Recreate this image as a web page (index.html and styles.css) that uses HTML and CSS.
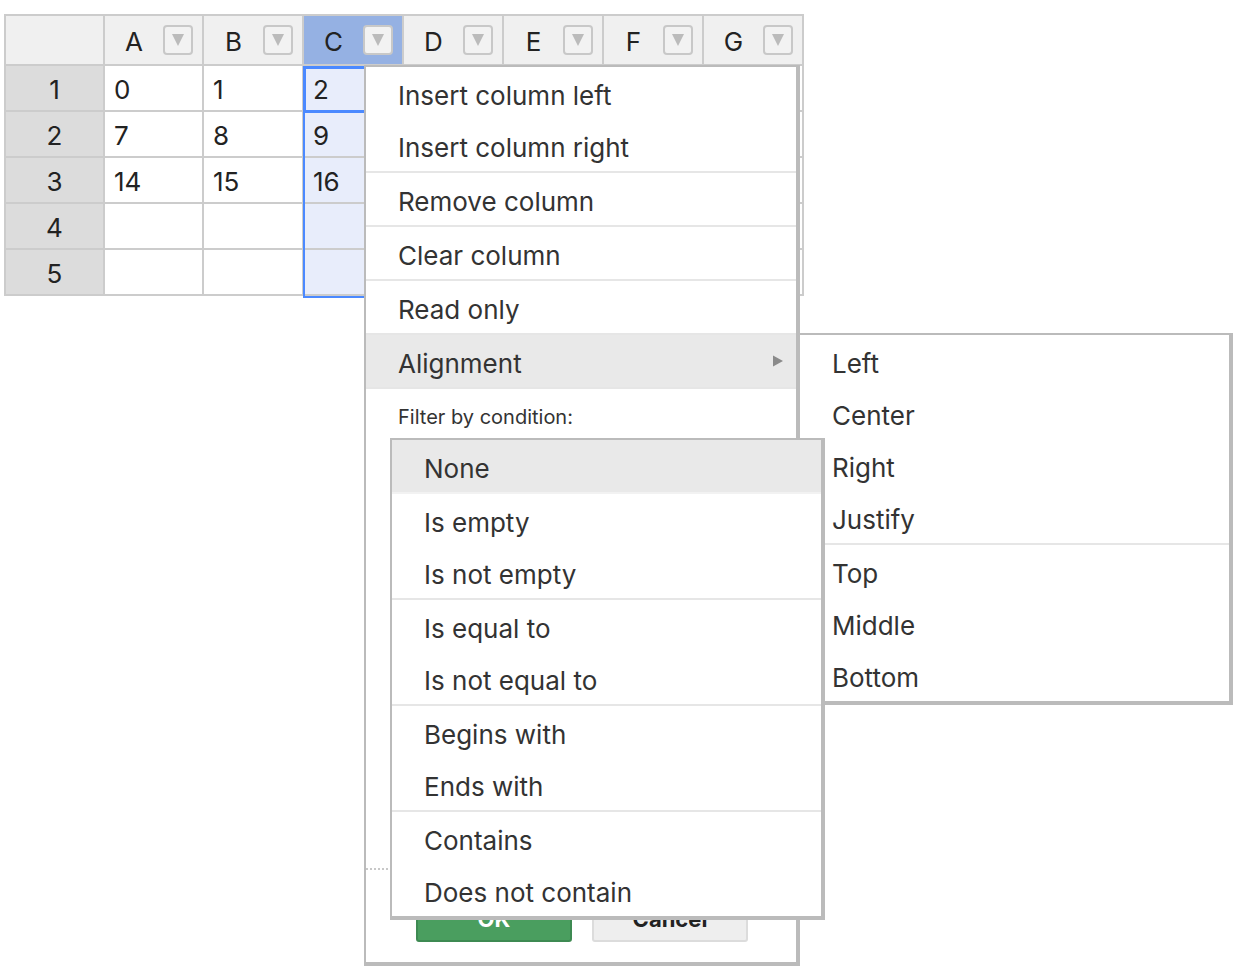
FILE: index.html
```html
<!DOCTYPE html>
<html lang="en">
<head>
<meta charset="utf-8">
<title>Column menu</title>
<link rel="stylesheet" href="styles.css">
</head>
<body>
<div class="grid">
  <div class="corner"></div>
  <div class="ch"><span class="ch-label">A</span><span class="ch-btn"><i class="tri"></i></span></div>
  <div class="ch"><span class="ch-label">B</span><span class="ch-btn"><i class="tri"></i></span></div>
  <div class="ch ch-sel"><span class="ch-label">C</span><span class="ch-btn"><i class="tri"></i></span></div>
  <div class="ch"><span class="ch-label">D</span><span class="ch-btn"><i class="tri"></i></span></div>
  <div class="ch"><span class="ch-label">E</span><span class="ch-btn"><i class="tri"></i></span></div>
  <div class="ch"><span class="ch-label">F</span><span class="ch-btn"><i class="tri"></i></span></div>
  <div class="ch"><span class="ch-label">G</span><span class="ch-btn"><i class="tri"></i></span></div>

  <div class="rh">1</div><div class="c">0</div><div class="c">1</div><div class="c c-sel">2</div><div class="c"></div><div class="c"></div><div class="c"></div><div class="c"></div>
  <div class="rh">2</div><div class="c">7</div><div class="c">8</div><div class="c c-sel">9</div><div class="c"></div><div class="c"></div><div class="c"></div><div class="c"></div>
  <div class="rh">3</div><div class="c">14</div><div class="c">15</div><div class="c c-sel">16</div><div class="c"></div><div class="c"></div><div class="c"></div><div class="c"></div>
  <div class="rh">4</div><div class="c"></div><div class="c"></div><div class="c c-sel"></div><div class="c"></div><div class="c"></div><div class="c"></div><div class="c"></div>
  <div class="rh">5</div><div class="c"></div><div class="c"></div><div class="c c-sel"></div><div class="c"></div><div class="c"></div><div class="c"></div><div class="c"></div>
</div>

<div class="sel-area"></div>
<div class="sel-cell"></div>

<div class="menu main-menu">
  <div class="mi">Insert column left</div>
  <div class="mi">Insert column right</div>
  <div class="sep"></div>
  <div class="mi">Remove column</div>
  <div class="sep"></div>
  <div class="mi">Clear column</div>
  <div class="sep"></div>
  <div class="mi">Read only</div>
  <div class="sep"></div>
  <div class="mi mi-hl mi-sub">Alignment<svg class="arrow" width="12" height="12" viewBox="0 0 12 12"><path d="M1 0.5 L11 6 L1 11.5 Z" fill="#8a8a8a"/></svg></div>
  <div class="sep"></div>
  <div class="label">Filter by condition:</div>
  <div class="filter-body"></div>
  <div class="dotted"></div>
  <div class="actions">
    <div class="btn btn-ok">OK</div>
    <div class="btn btn-cancel">Cancel</div>
  </div>
</div>

<div class="menu sub-menu">
  <div class="mi">Left</div>
  <div class="mi">Center</div>
  <div class="mi">Right</div>
  <div class="mi">Justify</div>
  <div class="sep"></div>
  <div class="mi">Top</div>
  <div class="mi">Middle</div>
  <div class="mi">Bottom</div>
</div>

<div class="menu filter-menu">
  <div class="mi mi-hl">None</div>
  <div class="sep sep-faint"></div>
  <div class="mi">Is empty</div>
  <div class="mi">Is not empty</div>
  <div class="sep"></div>
  <div class="mi">Is equal to</div>
  <div class="mi">Is not equal to</div>
  <div class="sep"></div>
  <div class="mi">Begins with</div>
  <div class="mi">Ends with</div>
  <div class="sep"></div>
  <div class="mi">Contains</div>
  <div class="mi">Does not contain</div>
</div>
</body>
</html>
```
FILE: styles.css
```css
html, body {
  margin: 0;
  padding: 0;
  background: #ffffff;
}

body {
  font-family: "Inter", "Liberation Sans", sans-serif;
  color: #222222;
  width: 1246px;
  height: 974px;
  overflow: hidden;
}

/* ---------- grid ---------- */
.grid {
  margin: 14px 0 0 4px;
  display: grid;
  grid-template-columns: 99px 99px repeat(6, 100px);
  grid-template-rows: 50px repeat(5, 46px);
  width: max-content;
  border-left: 2px solid #cccccc;
  border-top: 2px solid #cccccc;
}

.grid > div {
  box-sizing: border-box;
  border-right: 2px solid #cccccc;
  border-bottom: 2px solid #cccccc;
  font-size: 26px;
}

.corner {
  background: #f0f0f0;
}

.ch {
  background: #f0f0f0;
  display: flex;
  align-items: center;
}

.ch-sel {
  background: #95b1e3;
}

.ch-label {
  flex: 1;
  text-align: center;
  padding-top: 2px;
}

.ch-btn {
  width: 30px;
  height: 30px;
  box-sizing: border-box;
  margin-right: 9px;
  border: 2px solid #c8c8c8;
  border-radius: 4px;
  background: #f2f2f2;
  display: flex;
  align-items: center;
  justify-content: center;
}

.tri {
  width: 0;
  height: 0;
  border-left: 6px solid transparent;
  border-right: 6px solid transparent;
  border-top: 12px solid #bbbbbb;
}

.rh {
  background: #dcdcdc;
  display: flex;
  align-items: center;
  justify-content: center;
  padding-top: 2px;
}

.c {
  background: #ffffff;
  display: flex;
  align-items: center;
  padding-left: 9px;
  padding-top: 2px;
}

.c-sel {
  background: #e8edfb;
}

/* ---------- selection ---------- */
.sel-area {
  position: absolute;
  left: 303px;
  top: 66px;
  width: 120px;
  height: 232px;
  box-sizing: border-box;
  border: 2px solid #4b89ff;
}

.sel-cell {
  position: absolute;
  left: 303px;
  top: 66px;
  width: 120px;
  height: 47px;
  box-sizing: border-box;
  border: 3px solid #4b89ff;
}

/* ---------- menus ---------- */
.menu {
  position: absolute;
  box-sizing: border-box;
  background: #ffffff;
  border-top: 2px solid #bbbbbb;
  border-left: 2px solid #bbbbbb;
  border-right: 4px solid #bbbbbb;
  border-bottom: 4px solid #bbbbbb;
  display: flex;
  flex-direction: column;
  color: #333333;
}

.main-menu {
  left: 364px;
  top: 65px;
  width: 436px;
  height: 901px;
}

.sub-menu {
  left: 798px;
  top: 333px;
  width: 435px;
}

.filter-menu {
  left: 390px;
  top: 438px;
  width: 435px;
}

.mi {
  height: 52px;
  box-sizing: border-box;
  flex: none;
  display: flex;
  align-items: center;
  padding: 4px 32px 0;
  font-size: 26px;
  white-space: nowrap;
}

.mi-hl {
  background: #e9e9e9;
}

.mi-sub {
  justify-content: space-between;
  padding-right: 12px;
}

.arrow {
  display: block;
  margin-top: -4px;
}

.sep {
  height: 2px;
  flex: none;
  background: #e6e6e6;
}

.sep-faint {
  background: #f2f2f2;
}

.label {
  height: 52px;
  box-sizing: border-box;
  flex: none;
  display: flex;
  align-items: center;
  padding: 4px 32px 0;
  font-size: 20px;
}

.filter-body {
  height: 427px;
  flex: none;
}

.dotted {
  height: 0;
  flex: none;
  border-top: 2px dotted #c8c8c8;
}

.actions {
  display: flex;
  gap: 20px;
  padding: 34px 0 0 50px;
}

.btn {
  width: 156px;
  height: 38px;
  box-sizing: border-box;
  border-radius: 3px;
  font-weight: bold;
  font-size: 22px;
  display: flex;
  justify-content: center;
  align-items: flex-start;
  padding-top: 0;
}

.btn-ok {
  background: #4a9e5f;
  border: 2px solid #3e8a52;
  color: #ffffff;
}

.btn-cancel {
  background: #eeeeee;
  border: 2px solid #dcdcdc;
  color: #222222;
}
```
